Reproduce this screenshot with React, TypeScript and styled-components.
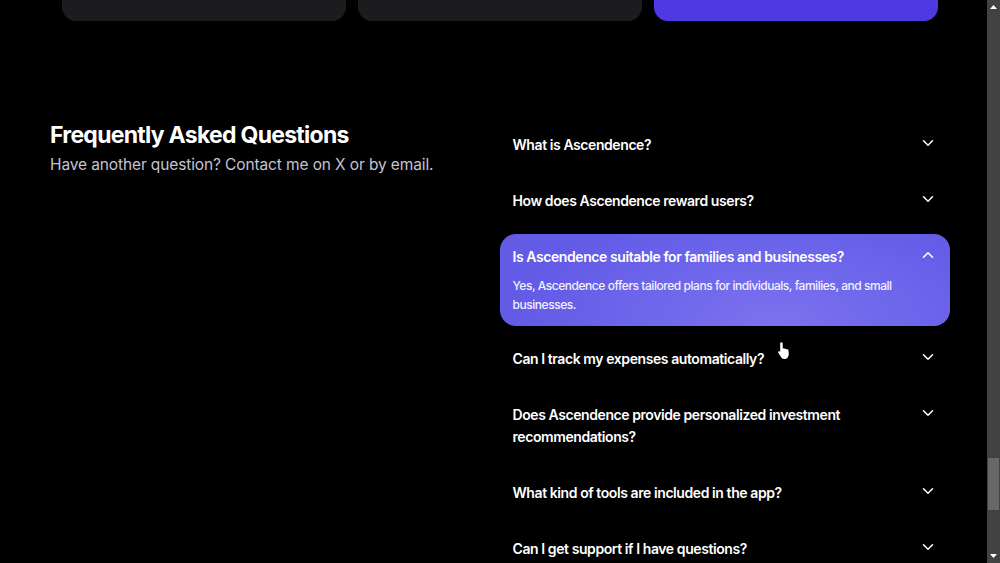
import { createGlobalStyle, styled } from "styled-components";
import { ChevronDown, ChevronUp } from "lucide-react";

const GlobalStyle = createGlobalStyle`
  html, body {
    margin: 0;
    height: 100%;
    overflow: hidden;
    background: #000;
  }
  * { box-sizing: border-box; }
`;

const faqs = [
  { q: "What is Ascendence?" },
  { q: "How does Ascendence reward users?" },
  {
    q: "Is Ascendence suitable for families and businesses?",
    a: "Yes, Ascendence offers tailored plans for individuals, families, and small businesses.",
  },
  { q: "Can I track my expenses automatically?" },
  { q: "Does Ascendence provide personalized investment recommendations?" },
  { q: "What kind of tools are included in the app?" },
  { q: "Can I get support if I have questions?" },
];

export default function App() {
  return (
    <Screen>
      <GlobalStyle />
      <Page>
        <Cards>
          <Card />
          <Card />
          <Card $accent />
        </Cards>
        <Faq>
          <Intro>
            <Title>Frequently Asked Questions</Title>
            <Sub>Have another question? Contact me on X or by email.</Sub>
          </Intro>
          <List>
            {faqs.map((item) => (
              <Item key={item.q} $open={!!item.a}>
                <Question>
                  <QuestionText>{item.q}</QuestionText>
                  <Toggle>
                    {item.a ? <ChevronUp size={18} /> : <ChevronDown size={18} />}
                  </Toggle>
                </Question>
                {item.a && <Answer>{item.a}</Answer>}
              </Item>
            ))}
          </List>
        </Faq>
        <Pointer viewBox="0 0 12 17" aria-hidden="true">
          <path
            d="M3.400.300c.8 0 1.300.6 1.300 1.400v4.800l.5-.1c.7-.3 1.400-.1 1.700.5.7-.3 1.400-.1 1.700.5.8-.2 1.600.2 1.800 1l.4 3.300c0 2.700-1.400 5.300-4 5.300H6c-1.400 0-2.300-.7-3-2L.3 10.700c-.5-.9.500-1.900 1.500-1.300l.4.300V1.700C2.200.900 2.600.300 3.400.300z"
            fill="#fff"
          />
        </Pointer>
      </Page>
      <Scrollbar>
        <Arrow viewBox="0 0 7 4"><path d="M3.500 0 7 4H0z" fill="#fff" /></Arrow>
        <Track>
          <Thumb />
        </Track>
        <Arrow viewBox="0 0 7 4"><path d="M0 0h7L3.500 4z" fill="#fff" /></Arrow>
      </Scrollbar>
    </Screen>
  );
}

const Screen = styled.div`
  display: flex;
  width: 1000px;
  height: 563px;
  overflow: hidden;
  background: #000;
  font-family: Inter, "Liberation Sans", sans-serif;
`;

const Page = styled.main`
  position: relative;
  width: 987px;
  flex: none;
`;

const Cards = styled.div`
  display: flex;
  gap: 12px;
  height: 21px;
  padding: 0 49px 0 62px;
`;

const Card = styled.div<{ $accent?: boolean }>`
  flex: 1;
  border-radius: 0 0 14px 14px;
  background: ${(p) => (p.$accent ? "#4f39e0" : "#1c1c1e")};
`;

const Faq = styled.section`
  display: flex;
  justify-content: space-between;
  margin-top: 95px;
  padding: 0 37px 0 50px;
`;

const Intro = styled.div`
  padding-top: 4px;
`;

const Title = styled.h2`
  margin: 0;
  color: #fff;
  font-size: 23px;
  line-height: 30px;
  font-weight: 700;
  letter-spacing: -0.73px;
`;

const Sub = styled.p`
  margin: 1px 0 0;
  color: #c4c4d0;
  font-size: 15.500px;
  line-height: 28px;
  letter-spacing: -0.12px;
`;

const List = styled.div`
  display: flex;
  flex-direction: column;
  gap: 12px;
  width: 450px;
  margin-top: 6px;
`;

const Item = styled.div<{ $open?: boolean }>`
  padding: 12px 13px ${(p) => (p.$open ? "12px" : "10px")} 12.500px;
  border-radius: 16px;
  margin-bottom: ${(p) => (p.$open ? "-2px" : "0")};
  background: ${(p) =>
    p.$open
      ? "radial-gradient(ellipse 260px 120px at 61% 95%, #7a72ee 0%, #6c64ea 60%, #635ae6 100%)"
      : "transparent"};
`;

const Question = styled.div`
  display: flex;
  justify-content: space-between;
  align-items: flex-start;
  color: #fff;
`;

const QuestionText = styled.span`
  max-width: 350px;
  font-size: 14px;
  line-height: 22px;
  font-weight: 600;
  letter-spacing: -0.42px;
`;

const Toggle = styled.span`
  display: flex;
  width: 18px;
  height: 18px;
`;

const Answer = styled.p`
  margin: 8px 0 0;
  color: #f2f1fe;
  font-size: 12px;
  line-height: 19px;
  font-weight: 500;
  letter-spacing: -0.46px;
`;

const Pointer = styled.svg`
  position: absolute;
  left: 778px;
  top: 342px;
  width: 12px;
  height: 17px;
`;

const Scrollbar = styled.aside`
  display: flex;
  flex-direction: column;
  align-items: center;
  width: 13px;
  padding: 5px 0;
  background: #424242;
`;

const Arrow = styled.svg`
  width: 7px;
  height: 4px;
  flex: none;
`;

const Track = styled.div`
  flex: 1;
  width: 100%;
  padding-top: 449px;
`;

const Thumb = styled.div`
  width: 11px;
  height: 52px;
  margin: 0 auto;
  background: #686868;
`;
